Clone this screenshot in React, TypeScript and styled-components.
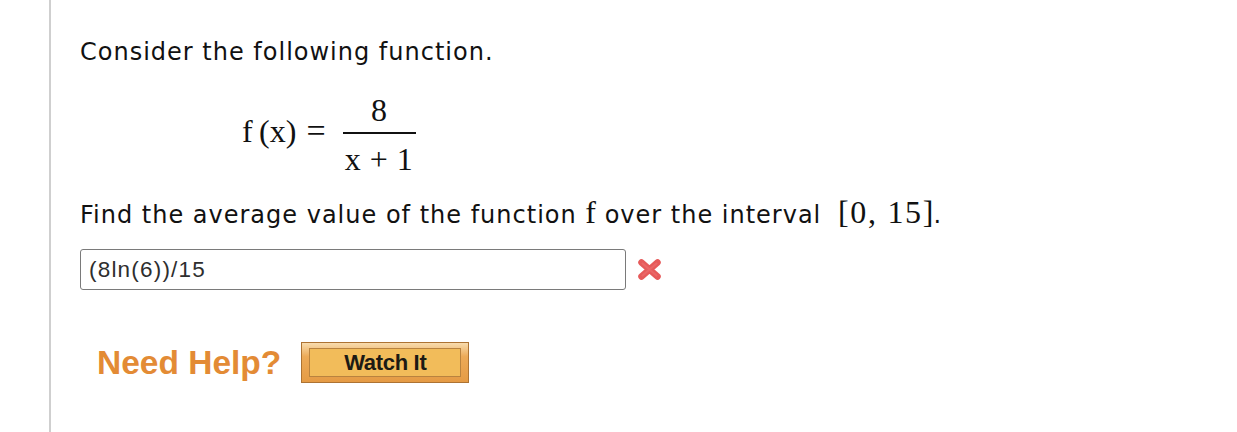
import React from "react";
import styled, { createGlobalStyle } from "styled-components";

const Global = createGlobalStyle`
  html, body { margin: 0; padding: 0; background: #fff; }
  body { font-family: "DejaVu Sans", Verdana, sans-serif; }
`;

const Page = styled.div`
  margin-left: 49px;
  border-left: 2px solid #cfcfcf;
  min-height: 432px;
  padding: 37px 0 0 29px;
  box-sizing: border-box;
  color: #111;
`;

const Para = styled.p`
  margin: 0;
  font-size: 24px;
  letter-spacing: 1px;
  line-height: 30px;
`;

const MathRow = styled.div`
  display: flex;
  align-items: flex-start;
  margin: 27px 0 0 162px;
  font-family: "Liberation Serif", "Times New Roman", serif;
  font-size: 32px;
  line-height: 32px;
`;

const Lhs = styled.span`
  margin-top: 21px;
  white-space: pre;
`;

const Equals = styled.span`
  margin: 21px 17px 0 10px;
  font-size: 34px;
  line-height: 32px;
`;

const Frac = styled.span`
  display: inline-flex;
  flex-direction: column;
  align-items: center;
  width: 73px;
`;

const Num = styled.span`
  padding-bottom: 6px;
`;

const Bar = styled.span`
  align-self: stretch;
  height: 2px;
  background: #111;
`;

const Den = styled.span`
  padding-top: 9px;
  white-space: pre;
  letter-spacing: 0.5px;
`;

const Question = styled(Para)`
  margin-top: 25px;
`;

const MathInline = styled.span<{ $lead?: number; $spread?: number }>`
  font-family: "Liberation Serif", "Times New Roman", serif;
  font-size: 32px;
  letter-spacing: ${(p) => p.$spread ?? 0}px;
  line-height: 0;
  white-space: pre;
  padding-left: ${(p) => p.$lead ?? 0}px;
`;

const Tight = styled.span`
  letter-spacing: 0;
`;

const AnswerRow = styled.div`
  display: flex;
  align-items: center;
  margin-top: 19px;
`;

const AnswerBox = styled.div`
  width: 546px;
  height: 41px;
  box-sizing: border-box;
  border: 1.5px solid #7a7a7a;
  border-radius: 3px;
  padding: 0 0 0 8px;
  display: flex;
  align-items: center;
  font-family: "Liberation Sans", Arial, sans-serif;
  font-size: 22.5px;
  letter-spacing: 1.2px;
  color: #2e2e2e;
`;

const Cross = styled.svg`
  margin-left: 10px;
  width: 27px;
  height: 25px;
`;

const HelpRow = styled.div`
  display: flex;
  align-items: center;
  margin-top: 52px;
  margin-left: 17px;
`;

const HelpLabel = styled.span`
  font-family: "Liberation Sans", Arial, sans-serif;
  font-weight: bold;
  font-size: 33.5px;
  color: #e38b35;
  margin-right: 20px;
`;

const WatchButton = styled.button`
  width: 168px;
  height: 41px;
  box-sizing: border-box;
  padding: 5px 7px;
  border: 1px solid #ad7333;
  background: linear-gradient(#f8dcae, #ecaa58 35%, #e59b45);
  display: flex;
  cursor: pointer;
`;

const WatchInner = styled.span`
  flex: 1;
  display: flex;
  align-items: center;
  justify-content: center;
  border: 1px solid #b9833f;
  background: #f2bc5a;
  font-family: "Liberation Sans", Arial, sans-serif;
  font-weight: bold;
  font-size: 22px;
  letter-spacing: -0.3px;
  color: #1c1a14;
`;

export default function App() {
  return (
    <>
      <Global />
      <Page>
        <Para>Consider the following function.</Para>
        <MathRow>
          <Lhs>{"f\u2009(x)"}</Lhs>
          <Equals>=</Equals>
          <Frac>
            <Num>8</Num>
            <Bar />
            <Den>x + 1</Den>
          </Frac>
        </MathRow>
        <Question>
          Find the average value of the function <MathInline>f</MathInline>{" "}
          over the interval{" "}
          <MathInline $lead={8} $spread={1.7}>
            [0, 15<Tight>]</Tight>
          </MathInline>
          .
        </Question>
        <AnswerRow>
          <AnswerBox>(8ln(6))/15</AnswerBox>
          <Cross viewBox="0 0 27 25">
            <path
              d="M5.5 5.5 L21.5 19.5 M21.5 5.5 L5.5 19.5"
              stroke="#e65a5a"
              strokeWidth="6.5"
              strokeLinecap="round"
            />
            <path
              d="M6.5 6.5 L20.5 18.5 M20.5 6.5 L6.5 18.5"
              stroke="#ee7070"
              strokeWidth="2"
              strokeLinecap="round"
              opacity="0.6"
            />
          </Cross>
        </AnswerRow>
        <HelpRow>
          <HelpLabel>Need Help?</HelpLabel>
          <WatchButton>
            <WatchInner>Watch It</WatchInner>
          </WatchButton>
        </HelpRow>
      </Page>
    </>
  );
}
